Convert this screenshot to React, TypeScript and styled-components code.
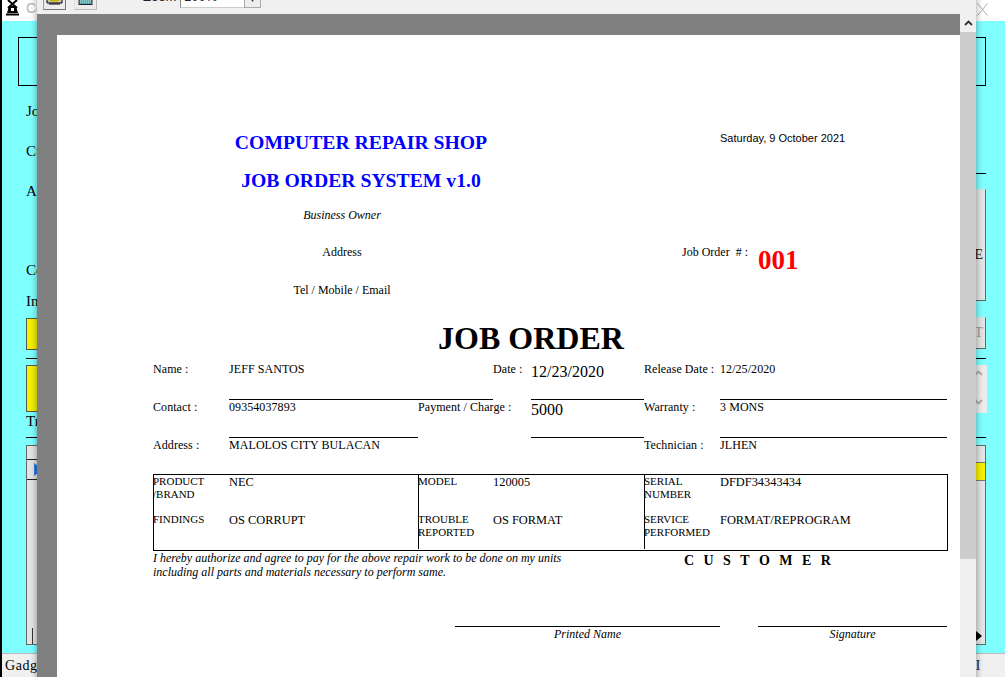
import React from "react";
import styled, { createGlobalStyle } from "styled-components";

const Global = createGlobalStyle`
  html, body { margin: 0; padding: 0; background: #fff; overflow: hidden; }
  * { box-sizing: border-box; }
`;

const Desktop = styled.div`
  position: relative;
  width: 1005px;
  height: 677px;
  overflow: hidden;
  font-family: "Liberation Serif", serif;
  color: #000;
`;

/* ---------- application behind the preview ---------- */
const App_ = styled.div`
  display: flex;
  flex-direction: column;
  height: 100%;
  border-left: 2px solid #000;
`;
const TitleBar = styled.div`
  height: 21px;
  flex: none;
  background: #fff;
  display: flex;
  align-items: flex-start;
  justify-content: space-between;
  padding: 0 17px 0 3px;
`;
const TitleLeft = styled.div`
  display: flex;
  gap: 6px;
  align-items: center;
  font: 14px "Liberation Sans", sans-serif;
  color: #b4b4b4;
  height: 16px;
`;
const CloseGlyph = styled.svg`
  width: 11px;
  height: 13px;
  margin-top: 3px;
`;
const FormBody = styled.div`
  flex: 1;
  min-height: 0;
  background: #80ffff;
  padding: 16px 19px 8px 24px;
  display: flex;
  flex-direction: column;
  font-size: 15px;
`;
const HeaderBox = styled.div`
  height: 49px;
  flex: none;
  margin-left: -8px;
  border: 1px solid #000;
`;
const UpperGrid = styled.div`
  display: grid;
  grid-template-columns: 1fr 300px;
  height: 264px;
  flex: none;
`;
const LabelStack = styled.div`
  display: flex;
  flex-direction: column;
`;
const FieldLabel = styled.div<{ $h: number; $top?: number }>`
  height: ${(p) => p.$h}px;
  margin-top: ${(p) => p.$top ?? 0}px;
  flex: none;
  display: flex;
  align-items: center;
  white-space: nowrap;
`;
const YellowField = styled.div<{ $h: number }>`
  height: ${(p) => p.$h}px;
  flex: none;
  background: #f5f000;
  border: 1px solid #555;
`;
const RightStack = styled.div`
  display: flex;
  flex-direction: column;
  padding-top: 87px;
`;
const Rule = styled.div<{ $top?: number }>`
  height: 1px;
  flex: none;
  margin-top: ${(p) => p.$top ?? 0}px;
  background: #000;
`;
const FormButton = styled.div<{ $h: number; $top: number; $faded?: boolean; $drop?: number }>`
  height: ${(p) => p.$h}px;
  margin-top: ${(p) => p.$top}px;
  flex: none;
  background: #e4e4e4;
  border-right: 1px solid #666;
  border-bottom: 1px solid #666;
  border-top: 1px solid #ddd;
  display: flex;
  align-items: center;
  justify-content: flex-end;
  padding: ${(p) => p.$drop ?? 0}px 2px 0 0;
  font: 14px "Liberation Serif", serif;
  color: ${(p) => (p.$faded ? "#999" : "#111")};
`;
const MidRow = styled.div`
  display: grid;
  grid-template-columns: 1fr 300px;
  margin-top: 6px;
  flex: none;
`;
const Spinner = styled.div`
  height: 48px;
  margin-right: -1px;
  background: #ececec;
  display: flex;
  flex-direction: column;
  justify-content: space-between;
  align-items: flex-end;
  padding: 5px 4px 8px 0;
  color: #aaa;
`;
const TrackLabel = styled.div`
  height: 24px;
  flex: none;
  display: flex;
  align-items: flex-start;
`;
const DataGrid = styled.div`
  margin-top: 7px;
  flex: 1;
  min-height: 0;
  background: #e4e4e4;
  border: 1px solid #666;
  display: flex;
  flex-direction: column;
`;
const DataHead = styled.div`
  height: 13px;
  flex: none;
`;
const DataRow = styled.div`
  height: 21px;
  flex: none;
  display: flex;
  justify-content: space-between;
`;
const RowMarker = styled.div`
  width: 40px;
  border-top: 1px solid #222;
  border-bottom: 1px solid #222;
  display: flex;
  align-items: center;
  padding-left: 7px;
`;
const SelectedCell = styled.div`
  width: 200px;
  height: 19px;
  margin-top: 3px;
  background: #f5f000;
  border-top: 1px solid #777;
  border-bottom: 1px solid #777;
`;
const ScrollStrip = styled.div`
  margin-top: auto;
  height: 16px;
  flex: none;
  display: flex;
  justify-content: space-between;
  align-items: center;
  padding: 0 3px 0 5px;
`;
const StripTick = styled.div`
  width: 1px;
  height: 16px;
  background: #333;
`;
const StatusBar = styled.div`
  height: 24px;
  flex: none;
  background: #f0f0f0;
  border-top: 1px solid #bbb;
  display: flex;
  justify-content: space-between;
  align-items: center;
  padding: 0 24px 0 3px;
  font: 14px "Liberation Serif", serif;
  letter-spacing: 0.6px;
`;
const StatusRight = styled.span`
  color: #234;
  font-size: 15px;
`;

/* ---------- print preview window ---------- */
const PreviewWindow = styled.div`
  position: absolute;
  left: 37px;
  top: -14px;
  width: 939px;
  height: 700px;
  display: flex;
  flex-direction: column;
  background: #f0f0f0;
  box-shadow: 0 0 7px rgba(0, 0, 0, 0.4);
`;
const Toolbar = styled.div`
  height: 28px;
  flex: none;
  background: #f0f0f0;
  display: flex;
  align-items: flex-start;
  padding-left: 6px;
  font: 13px "Liberation Sans", sans-serif;
`;
const ToolButton = styled.div<{ $raised?: boolean }>`
  width: 23px;
  height: 24px;
  flex: none;
  display: flex;
  align-items: flex-end;
  justify-content: center;
  padding-bottom: 3px;
  background: #ececec;
  border-right: 1px solid ${(p) => (p.$raised ? "#777" : "#bbb")};
  border-bottom: 1px solid ${(p) => (p.$raised ? "#777" : "#bbb")};
  border-left: 1px solid ${(p) => (p.$raised ? "#999" : "#ddd")};
  margin-right: 8px;
`;
const ZoomLabel = styled.span`
  margin-left: 38px;
  margin-top: 3px;
  width: 37px;
  line-height: 15px;
  color: #222;
`;
const ZoomCombo = styled.div`
  width: 81px;
  height: 22px;
  border-left: 1px solid #888;
  border-bottom: 1px solid #ccc;
  background: #fff;
  display: flex;
  justify-content: space-between;
  padding-left: 3px;
  padding-top: 3px;
  line-height: 15px;
  color: #222;
`;
const ComboArrow = styled.div`
  width: 17px;
  height: 22px;
  margin-top: -3px;
  background: #ededed;
  border: 1px solid #aaa;
  display: flex;
  align-items: flex-end;
  justify-content: center;
  padding-bottom: 4px;
  font-size: 6px;
  line-height: 6px;
`;
const ViewRow = styled.div`
  flex: 1;
  min-height: 0;
  display: flex;
`;
const Canvas = styled.div`
  flex: 1;
  min-width: 0;
  background: #808080;
  padding: 21px 0 0 20px;
`;
const Scrollbar = styled.div`
  width: 16px;
  flex: none;
  background: #f0f0f0;
  display: flex;
  flex-direction: column;
`;
const ScrollUp = styled.div`
  height: 18px;
  flex: none;
  display: flex;
  align-items: center;
  justify-content: center;
`;
const ScrollThumb = styled.div`
  height: 527px;
  flex: none;
  background: #cdcdcd;
`;

/* ---------- report page ---------- */
const Page = styled.div`
  width: 903px;
  height: 660px;
  background: #fff;
  padding: 88px 0 0 96px;
  font-size: 12px;
  line-height: 14px;
`;
const LetterHead = styled.div`
  display: grid;
  grid-template-columns: 416px 113px 38px 38px 1fr;
  grid-template-rows: 38px 38px 32px 42px 34px;
  width: 794px;
`;
const ShopTitle = styled.div<{ $row: number }>`
  grid-column: 1;
  grid-row: ${(p) => p.$row};
  align-self: center;
  text-align: center;
  color: #0000ff;
  font-weight: bold;
  font-size: 19.7px;
  line-height: 24px;
  white-space: nowrap;
`;
const ShopLine = styled.div<{ $row: number; $italic?: boolean }>`
  grid-column: 1;
  grid-row: ${(p) => p.$row};
  align-self: center;
  text-align: center;
  padding-right: 38px;
  font-style: ${(p) => (p.$italic ? "italic" : "normal")};
`;
const PrintDate = styled.div`
  grid-column: 4 / -1;
  grid-row: 1;
  font: 11px/14px "Liberation Sans", sans-serif;
  padding-top: 8px;
  white-space: nowrap;
`;
const JobLabel = styled.div`
  grid-column: 3 / 5;
  grid-row: 4;
  align-self: center;
  white-space: pre;
`;
const JobNumber = styled.div`
  grid-column: 5;
  grid-row: 4;
  align-self: center;
  color: #ff0000;
  font-weight: bold;
  font-size: 27px;
  line-height: 30px;
  margin-top: 16px;
`;
const DocTitle = styled.div`
  margin-top: 12px;
  width: 756px;
  text-align: center;
  font-weight: bold;
  font-size: 32px;
  line-height: 38px;
`;
const FieldGrid = styled.div`
  margin-top: 5px;
  width: 794px;
  display: grid;
  grid-template-columns: 76px 189px 75px 38px 113px 76px 227px;
  grid-auto-rows: 38px;
`;
const Cell = styled.div<{ $col: string; $line?: boolean; $large?: boolean }>`
  grid-column: ${(p) => p.$col};
  padding-top: ${(p) => (p.$large ? "1px" : "0")};
  font-size: ${(p) => (p.$large ? "16px" : "12px")};
  line-height: ${(p) => (p.$large ? "18px" : "14px")};
  letter-spacing: ${(p) => (p.$large ? "0" : "0.07px")};
  border-bottom: 1px solid ${(p) => (p.$line ? "#000" : "transparent")};
  white-space: nowrap;
`;
const DetailBox = styled.div`
  margin-top: -2px;
  width: 795px;
  height: 77px;
  border: 1px solid #000;
  display: grid;
  grid-template-columns: 264px 226px 1fr;
`;
const DetailGroup = styled.div`
  display: grid;
  grid-template-rows: 38px 37px;
  height: 74px;
  & + & {
    border-left: 1px solid #000;
  }
`;
const DetailPair = styled.div<{ $lead: number }>`
  display: grid;
  grid-template-columns: ${(p) => p.$lead}px 1fr;
`;
const DetailKey = styled.div`
  margin-left: -1px;
  font-size: 11px;
  line-height: 13px;
  white-space: pre-line;
`;
const DetailValue = styled.div`
  font-size: 12.4px;
  white-space: nowrap;
`;
const BelowBox = styled.div`
  width: 794px;
  display: grid;
  grid-template-columns: 491px 1fr;
`;
const Authorization = styled.div`
  font-style: italic;
  white-space: pre-line;
`;
const CustomerHead = styled.div`
  padding: 2px 0 0 40px;
  font-weight: bold;
  font-size: 14px;
  line-height: 16px;
  letter-spacing: 9.45px;
  white-space: nowrap;
`;
const SignRow = styled.div`
  margin: 47px 0 0 302px;
  width: 492px;
  display: grid;
  grid-template-columns: 265px 189px;
  justify-content: space-between;
`;
const SignField = styled.div`
  border-top: 1px solid #000;
  text-align: center;
  font-style: italic;
`;

const PrinterIcon = () => (
  <svg width="17" height="12" viewBox="0 0 17 12">
    <path d="M3 1h11v3H3z" fill="#fff" stroke="#000" />
    <path d="M1 5h15v4H1z" fill="#c8c8c8" stroke="#000" />
    <path d="M4 6.5h9" stroke="#c8b400" strokeWidth="2" />
    <path d="M3 10h11" stroke="#000" />
  </svg>
);
const PageIcon = () => (
  <svg width="15" height="11" viewBox="0 0 15 11">
    <rect x="1" y="0.5" width="13" height="9" fill="#5aa9a9" stroke="#223" />
    <path d="M2 3h11M2 5h11M2 7h11" stroke="#bfe8e8" strokeDasharray="1 1" />
  </svg>
);
const ShopIcon = () => (
  <svg width="15" height="16" viewBox="0 0 15 16">
    <path d="M3 0l9 8M12 0L3 8" stroke="#000" strokeWidth="2" />
    <path d="M4 6h7l2 7H2z" fill="#000" />
    <rect x="6" y="8" width="3" height="3" fill="#fff" />
    <path d="M1 14.5h13" stroke="#000" strokeWidth="2" />
  </svg>
);
const Chevron = ({ up, color }: { up?: boolean; color: string }) => (
  <svg width="9" height="6" viewBox="0 0 9 6">
    <path d={up ? "M1 5l3.5-3.5L8 5" : "M1 1l3.5 3.5L8 1"} fill="none" stroke={color} strokeWidth="1.8" />
  </svg>
);
const Arrow = ({ color, w, h }: { color: string; w: number; h: number }) => (
  <svg width={w} height={h} viewBox="0 0 6 10">
    <path d="M0 0l6 5-6 5z" fill={color} />
  </svg>
);

export default function App() {
  return (
    <Desktop>
      <Global />
      <App_>
        <TitleBar>
          <TitleLeft>
            <ShopIcon />
            <span>Computer</span>
          </TitleLeft>
          <CloseGlyph viewBox="0 0 11 13">
            <path d="M0.5 0.5l10 12M10.5 0.5l-10 12" stroke="#aaa" fill="none" />
          </CloseGlyph>
        </TitleBar>
        <FormBody>
          <HeaderBox />
          <UpperGrid>
            <LabelStack>
              <FieldLabel $h={50}>Job Order</FieldLabel>
              <FieldLabel $h={30}>Customer</FieldLabel>
              <FieldLabel $h={50}>Address</FieldLabel>
              <FieldLabel $h={30} $top={39}>Contact</FieldLabel>
              <FieldLabel $h={33}>Invoice</FieldLabel>
              <YellowField $h={32} />
            </LabelStack>
            <RightStack>
              <Rule />
              <FormButton $h={112} $top={15} $drop={20}>SAVE</FormButton>
              <FormButton $h={32} $top={16} $faded>EDIT</FormButton>
            </RightStack>
          </UpperGrid>
          <Rule $top={8} />
          <MidRow>
            <YellowField $h={47} />
            <Spinner>
              <Chevron up color="#aaa" />
              <Chevron color="#aaa" />
            </Spinner>
          </MidRow>
          <TrackLabel>Trouble</TrackLabel>
          <Rule />
          <DataGrid>
            <DataHead />
            <DataRow>
              <RowMarker>
                <Arrow color="#1a73e8" w={8} h={13} />
              </RowMarker>
              <SelectedCell />
            </DataRow>
            <ScrollStrip>
              <StripTick />
              <Arrow color="#000" w={6} h={10} />
            </ScrollStrip>
          </DataGrid>
        </FormBody>
        <StatusBar>
          <span>Gadgets</span>
          <StatusRight>I</StatusRight>
        </StatusBar>
      </App_>

      <PreviewWindow>
        <Toolbar>
          <ToolButton $raised>
            <PrinterIcon />
          </ToolButton>
          <ToolButton>
            <PageIcon />
          </ToolButton>
          <ZoomLabel>Zoom</ZoomLabel>
          <ZoomCombo>
            <span>100%</span>
            <ComboArrow>▼</ComboArrow>
          </ZoomCombo>
        </Toolbar>
        <ViewRow>
          <Canvas>
            <Page>
              <LetterHead>
                <ShopTitle $row={1}>COMPUTER REPAIR SHOP</ShopTitle>
                <ShopTitle $row={2}>JOB ORDER SYSTEM v1.0</ShopTitle>
                <ShopLine $row={3} $italic>Business Owner</ShopLine>
                <ShopLine $row={4}>Address</ShopLine>
                <ShopLine $row={5}>Tel / Mobile / Email</ShopLine>
                <PrintDate>Saturday, 9 October 2021</PrintDate>
                <JobLabel>Job Order  # :</JobLabel>
                <JobNumber>001</JobNumber>
              </LetterHead>
              <DocTitle>JOB ORDER</DocTitle>
              <FieldGrid>
                <Cell $col="1">Name :</Cell>
                <Cell $col="2 / 4" $line>JEFF SANTOS</Cell>
                <Cell $col="4">Date :</Cell>
                <Cell $col="5" $line $large>12/23/2020</Cell>
                <Cell $col="6">Release Date :</Cell>
                <Cell $col="7" $line>12/25/2020</Cell>

                <Cell $col="1">Contact :</Cell>
                <Cell $col="2" $line>09354037893</Cell>
                <Cell $col="3 / 5">Payment / Charge :</Cell>
                <Cell $col="5" $line $large>5000</Cell>
                <Cell $col="6">Warranty :</Cell>
                <Cell $col="7" $line>3 MONS</Cell>

                <Cell $col="1">Address :</Cell>
                <Cell $col="2">MALOLOS CITY BULACAN</Cell>
                <Cell $col="3 / 6" />
                <Cell $col="6">Technician :</Cell>
                <Cell $col="7">JLHEN</Cell>
              </FieldGrid>
              <DetailBox>
                <DetailGroup>
                  <DetailPair $lead={75}>
                    <DetailKey>{"PRODUCT\n/BRAND"}</DetailKey>
                    <DetailValue>NEC</DetailValue>
                  </DetailPair>
                  <DetailPair $lead={75}>
                    <DetailKey>FINDINGS</DetailKey>
                    <DetailValue>OS CORRUPT</DetailValue>
                  </DetailPair>
                </DetailGroup>
                <DetailGroup>
                  <DetailPair $lead={74}>
                    <DetailKey>MODEL</DetailKey>
                    <DetailValue>120005</DetailValue>
                  </DetailPair>
                  <DetailPair $lead={74}>
                    <DetailKey>{"TROUBLE\nREPORTED"}</DetailKey>
                    <DetailValue>OS FORMAT</DetailValue>
                  </DetailPair>
                </DetailGroup>
                <DetailGroup>
                  <DetailPair $lead={75}>
                    <DetailKey>{"SERIAL\nNUMBER"}</DetailKey>
                    <DetailValue>DFDF34343434</DetailValue>
                  </DetailPair>
                  <DetailPair $lead={75}>
                    <DetailKey>{"SERVICE\nPERFORMED"}</DetailKey>
                    <DetailValue>FORMAT/REPROGRAM</DetailValue>
                  </DetailPair>
                </DetailGroup>
              </DetailBox>
              <BelowBox>
                <Authorization>
                  {"I hereby authorize and agree to pay for the above repair work to be done on my units\nincluding all parts and materials necessary to perform same."}
                </Authorization>
                <CustomerHead>CUSTOMER</CustomerHead>
              </BelowBox>
              <SignRow>
                <SignField>Printed Name</SignField>
                <SignField>Signature</SignField>
              </SignRow>
            </Page>
          </Canvas>
          <Scrollbar>
            <ScrollUp>
              <Chevron up color="#333" />
            </ScrollUp>
            <ScrollThumb />
          </Scrollbar>
        </ViewRow>
      </PreviewWindow>
    </Desktop>
  );
}
